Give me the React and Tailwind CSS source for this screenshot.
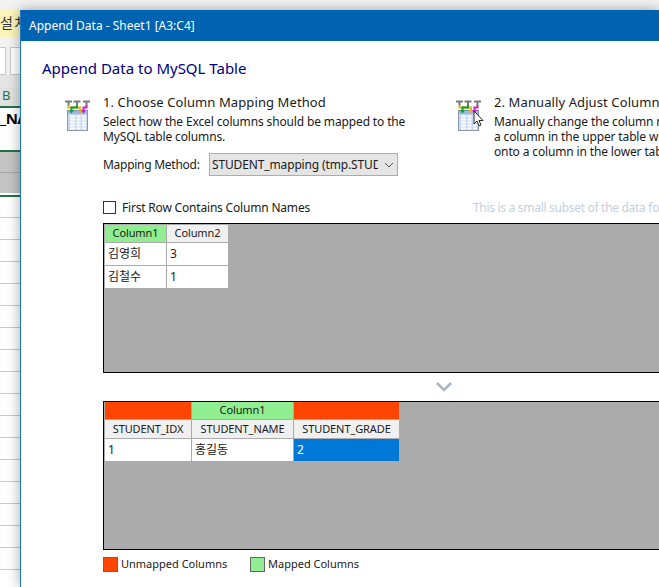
import { useState } from 'react'

const mapIcon = (
  <svg width="26" height="32" viewBox="0 0 26 32" className="shrink-0">
    {/* column tabs */}
    <path d="M0 1.500h7M3.500 1.500v4M8.500 1.500h7M12 1.500v4M18 1.500h7M21.500 1.500v4" stroke="#7a7a7a" strokeWidth="2" fill="none" />
    {/* table */}
    <rect x="2.500" y="10.500" width="20" height="20" fill="#c9d8f2" stroke="#8b98b0" />
    <rect x="3" y="11" width="19" height="3" fill="#9db6e3" />
    <path d="M5 16.500h5M5 19.500h5M5 22.500h5M5 25.500h5M5 28.500h5M11.500 16.500h4M11.500 19.500h4M11.500 22.500h4M11.500 25.500h4M11.500 28.500h4M17 16.500h4M17 19.500h4M17 22.500h4M17 25.500h4M17 28.500h4" stroke="#fff" strokeWidth="2" />
    {/* connectors */}
    <path d="M3.500 5v2.500h11.500v5" stroke="#e8b400" strokeWidth="2" fill="none" />
    <path d="M12 5v2.500H6.500v3" stroke="#169c40" strokeWidth="2" fill="none" />
    <path d="M4 10h5l-2.500 3.500z" fill="#169c40" />
    <path d="M21.500 5v2.500H18.500v3" stroke="#cc1fc4" strokeWidth="2" fill="none" />
    <path d="M16 10h5l-2.500 3.500z" fill="#cc1fc4" />
  </svg>
)

function Step({ title, lines, cursor, children, width }) {
  return (
    <div className={`flex shrink-0 ${width}`}>
      <div className="relative w-[38px] shrink-0 pt-[6px]">
        {mapIcon}
        {cursor}
      </div>
      <div>
        <div className="text-[13px] leading-[16px] tracking-[0.1px] whitespace-nowrap">{title}</div>
        <div className="mt-[4px] text-xs leading-[15px] tracking-[-0.14px] whitespace-nowrap">
          {lines.map(line => <div key={line}>{line}</div>)}
        </div>
        {children}
      </div>
    </div>
  )
}

function App() {
  const [firstRow, setFirstRow] = useState(false)

  return (
    <div className="flex h-[587px] w-[659px] overflow-hidden bg-[#f3f3f3] font-['Noto_Sans','Noto_Sans_CJK_KR',sans-serif] text-[#1a1a1a]">
      {/* excel behind the dialog */}
      <div className="flex w-5 shrink-0 flex-col overflow-hidden">
        <div className="h-[9px] shrink-0 bg-[#f3f3f3]" />
        <div className="h-[28px] shrink-0 whitespace-nowrap bg-[#fbf5bd] text-sm leading-[27px] tracking-[1px] text-[#333]">설치</div>
        <div className="h-[10px] shrink-0 bg-[#f3f3f3]" />
        <div className="flex h-[28px] shrink-0 bg-[#f0f0f0]">
          <div className="w-[6px] border border-l-0 border-[#c6c6c6] bg-white" />
          <div className="ml-1 w-[10px] border border-r-0 border-[#c6c6c6] bg-white" />
        </div>
        <div className="h-[12px] shrink-0 bg-[#e6e6e6]" />
        <div className="h-[19px] shrink-0 bg-[#e0e3e1] pl-[2px] text-[13px] leading-[16px] text-[#217346]">B</div>
        <div className="h-[2px] shrink-0 bg-[#217346]" />
        <div className="h-[42px] shrink-0 whitespace-nowrap bg-white text-[15px] font-bold leading-[20px] tracking-[-0.5px] text-black">_NA</div>
        <div className="h-[2px] shrink-0 bg-[#217346]" />
        <div className="h-[20px] shrink-0 bg-[#c4c4c4]" />
        <div className="h-px shrink-0 bg-[#a8a8a8]" />
        <div className="h-[20px] shrink-0 bg-[#c4c4c4]" />
        <div className="h-[2px] shrink-0 bg-white" />
        <div className="h-[2px] shrink-0 bg-[#217346]" />
        <div className="h-[20px] shrink-0 bg-white" />
        {Array.from({ length: 18 }).map((_, i) => (
          <div key={i} className="h-[22px] shrink-0 border-t border-[#c8c8c8] bg-white" />
        ))}
      </div>

      {/* dialog */}
      <div className="relative mt-[10px] flex min-w-0 flex-1 flex-col overflow-hidden border-l border-[#1a78c2] bg-white shadow-[0_0_12px_rgba(0,0,0,0.35)]">
        <div className="flex h-[31px] shrink-0 items-center bg-[#0063b1] pl-2 text-xs text-white">
          Append Data - Sheet1 [A3:C4]
        </div>

        <div className="pl-[21px] pt-[17px]">
          <h1 className="text-[15px] leading-[20px] text-[#000080]">Append Data to MySQL Table</h1>

          <div className="mt-[16px] flex pl-[23px]">
            <Step
              width="w-[391px]"
              title="1. Choose Column Mapping Method"
              lines={['Select how the Excel columns should be mapped to the', 'MySQL table columns.']}
            >
              <div className="mt-[9px] flex items-center text-xs">
                <span className="w-[106px] tracking-[-0.27px]">Mapping Method:</span>
                <div className="flex h-[23px] w-[189px] items-center justify-between border border-[#acacac] bg-[#e5e5e5] pl-[2px] pr-[3px]">
                  <span className="w-[166px] overflow-hidden whitespace-nowrap tracking-[-0.14px]">STUDENT_mapping (tmp.STUDENT)</span>
                  <svg width="10" height="6" viewBox="0 0 10 6"><path d="M1 1l4 4 4-4" stroke="#555" fill="none" /></svg>
                </div>
              </div>
            </Step>
            <Step
              width="w-[300px]"
              title="2. Manually Adjust Column Mapping"
              lines={[
                'Manually change the column mapping by dragging',
                'a column in the upper table with the mouse',
                'onto a column in the lower table.',
              ]}
              cursor={
                <svg width="12" height="18" viewBox="0 0 12 18" className="absolute left-[17px] top-[16px]">
                  <path d="M1 1v13l3-3 2 5 2-1-2-4.500h4z" fill="#fff" stroke="#222" strokeWidth="1" />
                </svg>
              }
            />
          </div>

          <div className="ml-[61px] mt-[25px] flex h-[13px] items-center text-xs">
            <button
              onClick={() => setFirstRow(!firstRow)}
              className="h-[13px] w-[13px] shrink-0 border border-[#333] bg-white"
              aria-label="First Row Contains Column Names"
            />
            <span className="ml-[6px] w-[351px] shrink-0 whitespace-nowrap tracking-[-0.19px]">First Row Contains Column Names</span>
            <span className="whitespace-nowrap tracking-[-0.3px] text-[#c5cfdd]">This is a small subset of the data for preview</span>
          </div>

          {/* excel data */}
          <div className="ml-[61px] mt-[9px] h-[150px] w-[620px] border border-black bg-[#ababab] pl-px pt-px text-[11px]">
            <div className="grid w-[123px] grid-cols-[61px_61px] gap-px bg-[#ababab]">
              <div className="flex h-[17px] items-center justify-center overflow-hidden bg-[#90ee90] tracking-[-0.1px]">Column1</div>
              <div className="flex h-[17px] items-center justify-center overflow-hidden bg-[#f0f0f0] tracking-[-0.1px]">Column2</div>
              <div className="flex h-[22px] items-center bg-white pl-[3px] text-xs">김영희</div>
              <div className="flex h-[22px] items-center bg-white pl-[3px] text-xs">3</div>
              <div className="flex h-[22px] items-center bg-white pl-[3px] text-xs">김철수</div>
              <div className="flex h-[22px] items-center bg-white pl-[3px] text-xs">1</div>
            </div>
          </div>

          <div className="ml-[393px] flex h-[28px] w-[18px] items-center justify-center pb-[2px]">
            <svg width="18" height="11" viewBox="0 0 18 11"><path d="M2 2l7 7 7-7" stroke="#a9b3c4" strokeWidth="2.500" fill="none" /></svg>
          </div>

          {/* mysql table */}
          <div className="ml-[61px] h-[149px] w-[620px] border border-black bg-[#ababab] pl-px text-[11px]">
            <div className="grid w-[294px] grid-cols-[86px_101px_105px] gap-px bg-[#ababab]">
              <div className="h-[17px] bg-[#ff4500]" />
              <div className="flex h-[17px] items-center justify-center bg-[#90ee90] tracking-[-0.1px]">Column1</div>
              <div className="h-[17px] bg-[#ff4500]" />
              <div className="flex h-[18px] items-center justify-center bg-[#f0f0f0] tracking-[-0.1px]">STUDENT_IDX</div>
              <div className="flex h-[18px] items-center justify-center bg-[#f0f0f0] tracking-[-0.1px]">STUDENT_NAME</div>
              <div className="flex h-[18px] items-center justify-center bg-[#f0f0f0] tracking-[-0.1px]">STUDENT_GRADE</div>
              <div className="flex h-[22px] items-center bg-white pl-[3px] text-xs">1</div>
              <div className="flex h-[22px] items-center bg-white pl-[3px] text-xs">홍길동</div>
              <div className="flex h-[22px] items-center bg-[#0078d7] pl-[3px] text-xs text-white">2</div>
            </div>
          </div>

          {/* legend */}
          <div className="ml-[61px] mt-[7px] flex items-start text-[11px] leading-[13px]">
            <div className="h-[15px] w-[15px] border border-[#666] bg-[#ff4500]" />
            <span className="ml-[3px] w-[129px]">Unmapped Columns</span>
            <div className="h-[15px] w-[15px] border border-[#666] bg-[#90ee90]" />
            <span className="ml-[3px]">Mapped Columns</span>
          </div>
        </div>
      </div>
    </div>
  )
}

export default App
